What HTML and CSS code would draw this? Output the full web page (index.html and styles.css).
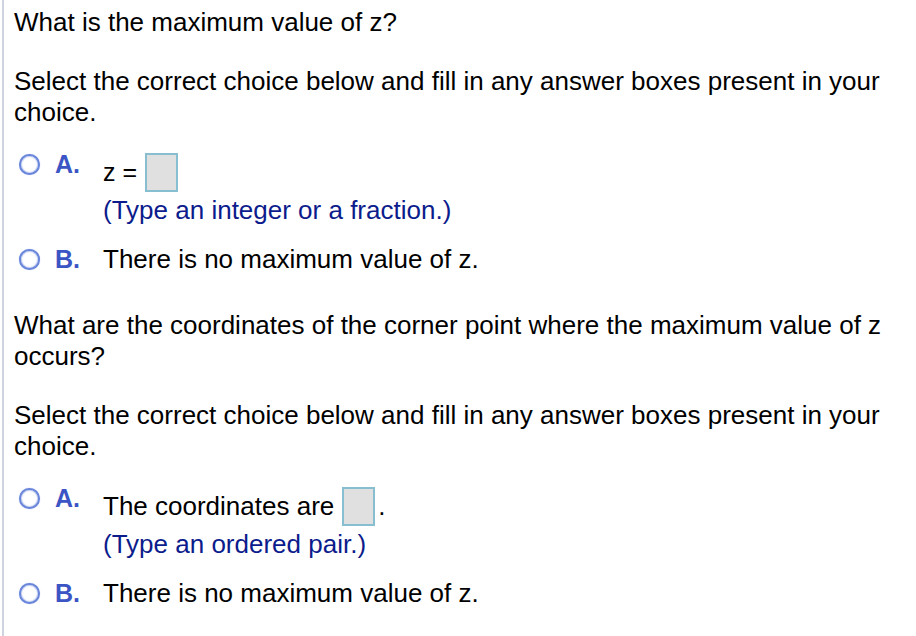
FILE: index.html
```html
<!DOCTYPE html>
<html>
<head>
<meta charset="utf-8">
<link rel="stylesheet" href="styles.css">
</head>
<body>
<div class="page">
  <p class="para first">What is the maximum value of z?</p>
  <p class="para">Select the correct choice below and fill in any answer boxes present in your choice.</p>
  <div class="choices">
    <div class="choice">
      <span class="radio"></span><span class="letter">A.</span>
      <div class="body">
        <div class="boxline"><span class="math">z =</span><span class="box"></span></div>
        <div class="hint">(Type an integer or a fraction.)</div>
      </div>
    </div>
    <div class="choice">
      <span class="radio"></span><span class="letter">B.</span>
      <div class="body">There is no maximum value of z.</div>
    </div>
  </div>

  <p class="para second">What are the coordinates of the corner point where the maximum value of z occurs?</p>
  <p class="para">Select the correct choice below and fill in any answer boxes present in your choice.</p>
  <div class="choices">
    <div class="choice">
      <span class="radio"></span><span class="letter">A.</span>
      <div class="body">
        <div class="boxline"><span>The coordinates are</span><span class="box"></span><span class="dot">.</span></div>
        <div class="hint">(Type an ordered pair.)</div>
      </div>
    </div>
    <div class="choice">
      <span class="radio"></span><span class="letter">B.</span>
      <div class="body">There is no maximum value of z.</div>
    </div>
  </div>
</div>
</body>
</html>
```
FILE: styles.css
```css
html, body {
  margin: 0;
  padding: 0;
  background: #ffffff;
}
body {
  font-family: "Liberation Sans", Arial, Helvetica, sans-serif;
  font-size: 26px;
  line-height: 31px;
  color: #000000;
}
.page {
  margin-left: 2px;
  border-left: 2px solid #cfd3e1;
  padding: 7px 12px 0 10px;
  min-height: 629px;
}
.para {
  margin: 28px 0 0 0;
}
.para.first {
  margin-top: 0;
}
.para.second {
  margin-top: 35px;
}
.choices {
  margin-top: 21px;
}
.choice {
  display: flex;
  align-items: flex-start;
}
.choice + .choice {
  margin-top: 18px;
}
.radio {
  flex: none;
  width: 17px;
  height: 17px;
  margin: 5px 0 0 5px;
  border: 2px solid #6a86da;
  border-radius: 50%;
  box-shadow: inset 0 0 1px 1px #c9d4f4, 0 0 1px #9fb2ec;
  background: #ffffff;
}
.letter {
  flex: none;
  width: 48px;
  margin-left: 15px;
  font-weight: bold;
  color: #3b55c4;
  font-size: 25px;
}
.body {
  flex: 1;
}
.boxline {
  display: flex;
  align-items: center;
  height: 39px;
  margin-top: 4px;
}
.math {
  font-size: 25px;
}
.box {
  display: inline-block;
  box-sizing: border-box;
  width: 33px;
  height: 39px;
  margin-left: 8px;
  border: 2px solid #88bfd0;
  background: #e0e0e0;
}
.dot {
  margin-left: 3px;
}
.hint {
  margin-top: 3px;
  color: #0c1c8c;
}
```
